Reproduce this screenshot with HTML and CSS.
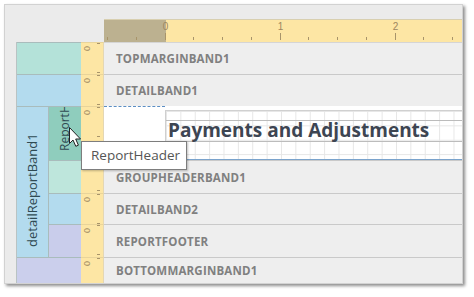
FILE: index.html
```html
<!DOCTYPE html>
<html>
<head>
<meta charset="utf-8">
<link rel="stylesheet" href="styles.css">
</head>
<body>
<div class="panel">
  <div class="toprow">
    <div class="corner"></div>
    <div class="ruler">
      <div class="ruler-margin"></div>
      <div class="ruler-rest"></div>
      <span class="major" style="left:61px"></span><span class="num" style="left:58px">0</span>
      <span class="major" style="left:176px"></span><span class="num" style="left:173px">1</span>
      <span class="major" style="left:291px"></span><span class="num" style="left:288px">2</span>
    </div>
  </div>
  <div class="main">
    <div class="tree">
      <div class="cell c-top span2"></div>
      <div class="cell c-detail span2"></div>
      <div class="cell c-drb"><div class="vtext vt-drb">detailReportBand1</div></div>
      <div class="cell c-rh"><div class="vtext vt-rh">ReportHeader</div></div>
      <div class="cell c-gh"></div>
      <div class="cell c-d2"></div>
      <div class="cell c-rf"></div>
      <div class="cell c-bm span2"></div>
    </div>
    <div class="vruler">
      <div class="seg h32"><span class="z">0</span></div>
      <div class="seg h32"><span class="z">0</span></div>
      <div class="seg h54"><span class="z">0</span></div>
      <div class="seg h33"><span class="z">0</span></div>
      <div class="seg h31"><span class="z">0</span></div>
      <div class="seg h33"><span class="z">0</span></div>
      <div class="seg h26"><span class="z">0</span></div>
    </div>
    <div class="bands">
      <div class="band h32 first"><span class="label">TOPMARGINBAND1</span></div>
      <div class="band h32"><span class="label">DETAILBAND1</span></div>
      <div class="rh-band">
        <div class="rh-margin"></div>
        <div class="rh-body">
          <div class="title">Payments and Adjustments</div>
        </div>
      </div>
      <div class="band h33"><span class="label">GROUPHEADERBAND1</span></div>
      <div class="band h31"><span class="label">DETAILBAND2</span></div>
      <div class="band h33"><span class="label">REPORTFOOTER</span></div>
      <div class="band h26"><span class="label">BOTTOMMARGINBAND1</span></div>
    </div>
  </div>
  <div class="tooltip">ReportHeader</div>
  <svg class="cursor" width="14" height="22" viewBox="0 0 14 22"><path d="M1.5 1.5 L1.5 17.5 L5 14 L7.8 20.3 L10.4 19.2 L7.7 13 L12.5 13 Z" fill="#fff" stroke="#222" stroke-width="1" stroke-linejoin="round"/></svg>
</div>
</body>
</html>
```
FILE: styles.css
```css
* { box-sizing: border-box; }
html, body { margin: 0; padding: 0; background: #fff; }
body { width: 474px; height: 297px; overflow: hidden; font-family: "Open Sans", "Noto Sans", sans-serif; }

.panel {
  position: relative;
  margin: 4px 0 0 4px;
  width: 459px;
  height: 280px;
  background: #ebebeb;
  border: 1px solid #d2d2d2;
  box-shadow: 2px 2px 3px rgba(0,0,0,0.45);
  padding: 14px 0 0 11px;
}

.toprow { display: flex; height: 23px; }
.corner { width: 88px; }
.ruler {
  position: relative;
  width: 358px;
  display: flex;
  border-top: 1px solid #d8cfb0;
}
.ruler-margin { width: 62px; background: #bcb190; }
.ruler-rest { flex: 1; background: #fde6a4; }
.ruler::after {
  content: "";
  position: absolute; left: 0; right: 0; top: 17px; height: 3px;
  background-image: repeating-linear-gradient(90deg, transparent 0 3px, #a8946a 3px 4px, transparent 4px 28.75px);
}
.major { position: absolute; top: 13px; width: 1px; height: 7px; background: #a8946a; }
.num { position: absolute; top: 1px; width: 7px; text-align: center; font-size: 10px; line-height: 12px; color: #9d8760; font-family: "Liberation Sans", sans-serif; }

.main { display: flex; }

.tree {
  width: 65px;
  display: grid;
  grid-template-columns: 32px 33px;
  grid-template-rows: 32px 32px 54px 33px 31px 33px 26px;
  border-left: 1px solid #b9c3c3;
}
.cell { border-top: 1px solid #a9bcbc; overflow: hidden; }
.span2 { grid-column: 1 / 3; }
.c-top { background: #b4e2d9; }
.c-detail { background: #b3dbee; }
.c-drb { grid-row: 3 / 7; grid-column: 1; background: #b3dbee; border-right: 1px solid #a9bcbc; }
.c-rh { background: #8fcdbd; }
.c-gh { background: #bee6dc; }
.c-d2 { background: #b3dbee; }
.c-rf { background: #c9cdeb; }
.c-bm { background: #cbcfec; }

.vtext {
  writing-mode: vertical-rl;
  transform: rotate(180deg);
  white-space: nowrap;
  height: 100%;
  font-size: 13px;
  color: #2f4a52;
}
.vt-drb { line-height: 31px; padding-top: 10px; text-align: start; }
.vt-rh { line-height: 32px; padding-top: 9px; text-align: start; font-size: 12px; }

.vruler { width: 23px; }
.seg {
  position: relative;
  background: #fde6a4;
  border-top: 1px solid #e9d49a;
  border-right: 1px solid #e4d7b4;
  background-image: repeating-linear-gradient(180deg, #a8946a 0 1px, transparent 1px 28.75px);
  background-size: 3px 100%;
  background-position: 16px 0;
  background-repeat: no-repeat;
}
.seg .z {
  position: absolute; left: 3px; top: 1px;
  font-size: 9px; line-height: 9px; color: #a08a62;
  transform: rotate(90deg);
  font-family: "Liberation Sans", sans-serif;
}
.h32 { height: 32px; }
.h33 { height: 33px; }
.h31 { height: 31px; }
.h26 { height: 26px; }
.h54 { height: 54px; }

.bands { width: 358px; }
.band {
  display: flex; align-items: center;
  background: #eeeeee;
  border-top: 1px solid #c9c9c9;
  padding-left: 12px;
}
.band.first { border-top-color: #d5d5d5; }
.label { font-weight: 700; font-size: 11.5px; color: #808080; letter-spacing: 0.2px; }

.rh-band {
  height: 54px;
  display: flex;
  background: #fff;
  border-bottom: 1px solid #7aa3cc;
}
.rh-margin { width: 61px; border-top: 1px dashed #5b8ec4; }
.rh-body {
  flex: 1;
  margin-top: 4px;
  border-top: 1px solid #d0d0d0;
  border-left: 1px solid #cfcfcf;
  background-color: #fff;
  background-image:
    linear-gradient(#e6e6e6 1px, transparent 1px),
    linear-gradient(90deg, #e6e6e6 1px, transparent 1px);
  background-size: 14.375px 14.375px;
  padding-top: 9px;
}
.title {
  height: 22px;
  border-top: 1px solid #bcbcbc;
  border-bottom: 1px solid #bcbcbc;
  font-weight: 700;
  font-size: 19px;
  line-height: 19px;
  color: #3d4552;
  padding-left: 2px;
  white-space: nowrap;
}

.tooltip {
  position: absolute;
  left: 76px; top: 136px;
  width: 106px; height: 29px;
  background: #fff;
  border: 1px solid #7d7d7d;
  box-shadow: 1px 1px 2px rgba(0,0,0,0.25);
  font-size: 13.5px;
  line-height: 27px;
  padding-left: 9px;
  color: #555;
}
.cursor { position: absolute; left: 63px; top: 121px; }
```
